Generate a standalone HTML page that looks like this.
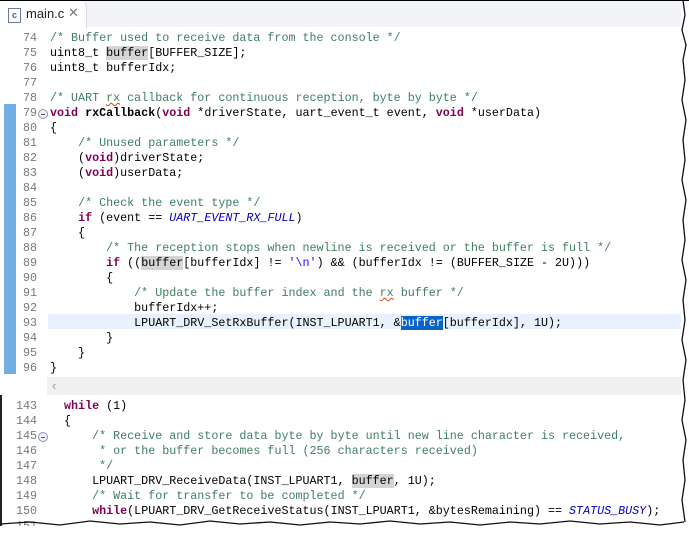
<!DOCTYPE html>
<html><head><meta charset="utf-8"><style>
body{margin:0;width:689px;height:530px;overflow:hidden;background:#fff;position:relative;font-family:"Liberation Mono",monospace;}
.l{position:absolute;left:0;height:15px;line-height:15px;font-size:11.7px;white-space:pre;width:681px;margin-top:2px}
.n{position:absolute;width:37px;text-align:right;color:#787878;left:0}
.n2{position:absolute;left:16px;color:#787878}
.c{position:absolute;left:50px;color:#000}
.cm{color:#3f7f5f}.k{color:#7f0055;font-weight:bold}.m{color:#0000c0;font-style:italic}.s{color:#2a00ff}
.hl{background:#d4d4d4}.sel{background:#0a64c8;color:#fff}
.sq{text-decoration:underline wavy #e04020;text-decoration-thickness:1px}
.fold{position:absolute;left:38px;top:3px;width:8px;height:8px;border:1px solid #8a96a8;border-radius:50%;background:#eef}
.fold:after{content:"";position:absolute;left:2px;top:3.5px;width:4px;height:1px;background:#555}
</style></head><body>
<div style="position:absolute;left:0;top:0;width:689px;height:1px;background:#000"></div>
<div style="position:absolute;left:0;top:1px;width:681px;height:26px;background:#f3f4f8"></div>
<div style="position:absolute;left:0;top:1px;width:86px;height:27px;background:#fff;border-right:1px solid #d8d8dc;border-top-right-radius:6px"></div>
<div style="position:absolute;left:8px;top:8px;width:11px;height:13px;border:1px solid #6a7a98;background:#fff;font:bold 9px 'Liberation Sans',sans-serif;color:#3b5a9a;line-height:13px;text-align:center">c</div>
<div style="position:absolute;left:26px;top:6px;font:13px 'Liberation Sans',sans-serif;color:#222">main.c</div>
<div style="position:absolute;left:68px;top:5px;font:13px 'Liberation Sans',sans-serif;color:#777">✕</div>
<div style="position:absolute;left:4px;top:104px;width:12px;height:270px;background-color:#4a98dc;background-image:radial-gradient(#e4f0fb 40%,transparent 45%);background-size:2px 2px"></div>
<div style="position:absolute;left:48px;top:314px;width:633px;height:15px;background:#e8f2fe"></div>
<div style="position:absolute;left:47px;top:377px;width:634px;height:18px;background:#f0f0f0"></div>
<div style="position:absolute;left:52px;top:378px;color:#999;font:13px 'Liberation Sans',sans-serif">&lsaquo;</div>
<div style="position:absolute;left:0;top:395px;width:2px;height:135px;background:#222"></div>

<div class="l" style="top:29px"><span class="n">74</span><span class="c"><span class="cm">/* Buffer used to receive data from the console */</span></span></div>
<div class="l" style="top:44px"><span class="n">75</span><span class="c">uint8_t <span class="hl">buffer</span>[BUFFER_SIZE];</span></div>
<div class="l" style="top:59px"><span class="n">76</span><span class="c">uint8_t bufferIdx;</span></div>
<div class="l" style="top:74px"><span class="n">77</span></div>
<div class="l" style="top:89px"><span class="n">78</span><span class="c"><span class="cm">/* UART <span class="sq">rx</span> callback for continuous reception, byte by byte */</span></span></div>
<div class="l" style="top:104px"><span class="n">79</span><span class="fold"></span><span class="c"><span class="k">void</span> <b>rxCallback</b>(<span class="k">void</span> *driverState, uart_event_t event, <span class="k">void</span> *userData)</span></div>
<div class="l" style="top:119px"><span class="n">80</span><span class="c">{</span></div>
<div class="l" style="top:134px"><span class="n">81</span><span class="c">    <span class="cm">/* Unused parameters */</span></span></div>
<div class="l" style="top:149px"><span class="n">82</span><span class="c">    (<span class="k">void</span>)driverState;</span></div>
<div class="l" style="top:164px"><span class="n">83</span><span class="c">    (<span class="k">void</span>)userData;</span></div>
<div class="l" style="top:179px"><span class="n">84</span></div>
<div class="l" style="top:194px"><span class="n">85</span><span class="c">    <span class="cm">/* Check the event type */</span></span></div>
<div class="l" style="top:209px"><span class="n">86</span><span class="c">    <span class="k">if</span> (event == <span class="m">UART_EVENT_RX_FULL</span>)</span></div>
<div class="l" style="top:224px"><span class="n">87</span><span class="c">    {</span></div>
<div class="l" style="top:239px"><span class="n">88</span><span class="c">        <span class="cm">/* The reception stops when newline is received or the buffer is full */</span></span></div>
<div class="l" style="top:254px"><span class="n">89</span><span class="c">        <span class="k">if</span> ((<span class="hl">buffer</span>[bufferIdx] != <span class="s">'\n'</span>) &amp;&amp; (bufferIdx != (BUFFER_SIZE - 2U)))</span></div>
<div class="l" style="top:269px"><span class="n">90</span><span class="c">        {</span></div>
<div class="l" style="top:284px"><span class="n">91</span><span class="c">            <span class="cm">/* Update the buffer index and the <span class="sq">rx</span> buffer */</span></span></div>
<div class="l" style="top:299px"><span class="n">92</span><span class="c">            bufferIdx++;</span></div>
<div class="l" style="top:314px"><span class="n">93</span><span class="c">            LPUART_DRV_SetRxBuffer(INST_LPUART1, &amp;<span class="sel">buffer</span>[bufferIdx], 1U);</span></div>
<div class="l" style="top:329px"><span class="n">94</span><span class="c">        }</span></div>
<div class="l" style="top:344px"><span class="n">95</span><span class="c">    }</span></div>
<div class="l" style="top:359px"><span class="n">96</span><span class="c">}</span></div>

<div class="l" style="top:397px"><span class="n2">143</span><span class="c">  <span class="k">while</span> (1)</span></div>
<div class="l" style="top:412px"><span class="n2">144</span><span class="c">  {</span></div>
<div class="l" style="top:427px"><span class="n2">145</span><span class="fold" style="left:38px"></span><span class="c">      <span class="cm">/* Receive and store data byte by byte until new line character is received,</span></span></div>
<div class="l" style="top:442px"><span class="n2">146</span><span class="c">      <span class="cm"> * or the buffer becomes full (256 characters received)</span></span></div>
<div class="l" style="top:457px"><span class="n2">147</span><span class="c">      <span class="cm"> */</span></span></div>
<div class="l" style="top:472px"><span class="n2">148</span><span class="c">      LPUART_DRV_ReceiveData(INST_LPUART1, <span class="hl">buffer</span>, 1U);</span></div>
<div class="l" style="top:487px"><span class="n2">149</span><span class="c">      <span class="cm">/* Wait for transfer to be completed */</span></span></div>
<div class="l" style="top:502px"><span class="n2">150</span><span class="c">      <span class="k">while</span>(LPUART_DRV_GetReceiveStatus(INST_LPUART1, &amp;bytesRemaining) == <span class="m">STATUS_BUSY</span>);</span></div>
<div class="l" style="top:517px"><span class="n2">151</span></div>
<div style="position:absolute;left:0;top:526px;width:689px;height:4px;background:#fff"></div>
<svg style="position:absolute;left:0;top:0" width="689" height="530">
<polyline fill="none" stroke="#111" stroke-width="1.3" points="0,524 30,522 60,525 90,521 120,524 150,522 180,525 210,521 240,524 270,522 300,525 330,522 360,524 390,521 420,524 450,522 480,525 510,522 540,524 570,521 600,524 630,522 660,525 684,522"/>
<polyline fill="none" stroke="#111" stroke-width="1.3" points="683,0 685,15 682,30 686,45 683,60 685,80 682,100 686,120 683,140 685,160 682,180 686,200 683,220 685,240 682,260 686,280 683,300 685,320 682,340 686,360 683,380 685,400 682,420 686,440 683,460 685,480 682,500 685,522"/>
</svg>
</body></html>
